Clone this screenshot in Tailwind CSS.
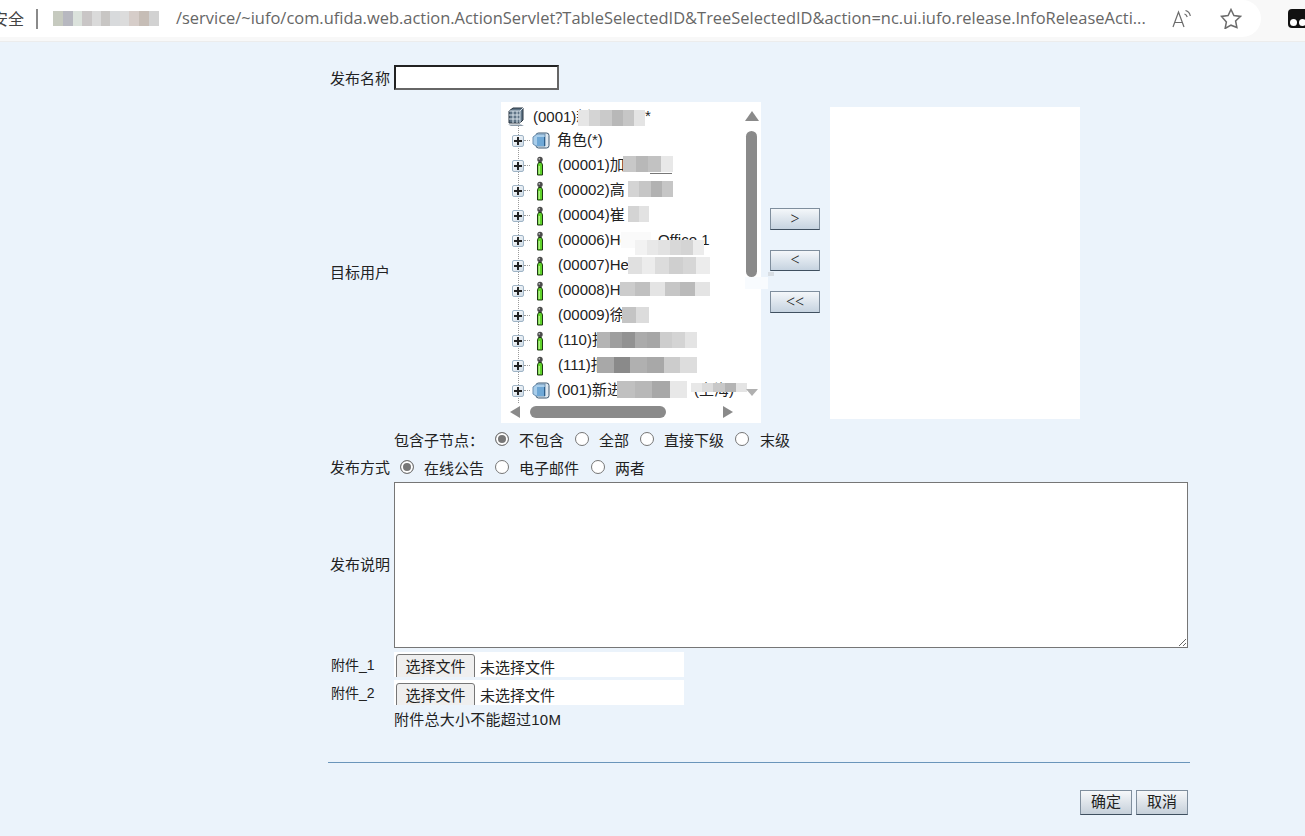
<!DOCTYPE html>
<html>
<head>
<meta charset="utf-8" />
<script src="https://cdn.jsdelivr.net/npm/@tailwindcss/browser@4"></script>
</head>
<body class="relative bg-[#ebf3fb] text-[15px] text-[#222] font-['Liberation_Sans','Noto_Sans_CJK_SC',sans-serif] overflow-hidden h-[836px]">

<!-- browser toolbar -->
<header class="h-[42px] bg-[#f8f8f8] border-b border-[#ececec] flex overflow-hidden font-['Open_Sans','Noto_Sans_CJK_SC',sans-serif]">
  <div class="h-[37px] w-[1269px] shrink-0 -ml-[8px] bg-white rounded-r-[19px] flex items-center text-[#5f5f5f]">
    <span class="text-[16px] w-[32px] shrink-0 text-[#444] whitespace-nowrap">安全</span>
    <span class="ml-[12px] w-[2px] h-[20px] bg-[#8a8a8a] shrink-0"></span>
    <span class="ml-[15px] w-[118px] h-[15px] shrink-0 flex">
      <i class="w-[10px] bg-[#c6cabf]"></i><i class="w-[10px] bg-[#b7b8c0]"></i><i class="w-[9px] bg-[#dbe2dc]"></i><i class="w-[10px] bg-[#c9c6c6]"></i><i class="w-[9px] bg-[#dadada]"></i><i class="w-[9px] bg-[#c8c6c4]"></i><i class="w-[10px] bg-[#d8dadc]"></i><i class="w-[9px] bg-[#dcdcdc]"></i><i class="w-[10px] bg-[#d6cdc9]"></i><i class="w-[10px] bg-[#c6bdb6]"></i><i class="w-[10px] bg-[#d2d2d2]"></i>
    </span>
    <span class="ml-[5px] text-[16.45px] text-[#666] whitespace-nowrap">/service/~iufo/com.ufida.web.action.ActionServlet?TableSelectedID&amp;TreeSelectedID&amp;action=nc.ui.iufo.release.InfoReleaseActi...</span>
    <svg class="ml-auto shrink-0" width="20" height="20" viewBox="0 0 20 20" fill="none" stroke="#6b6b6b" stroke-width="1.2"><path d="M1 18 6.500 3l5.500 15M2.800 13.500h7.400"/><path d="M12.500 5c1.500.5 2.300 1.400 2.700 3M13.500 1.500c2.600.7 4.300 2.500 4.800 5.500"/></svg>
    <svg class="ml-[28px] mr-[19px] shrink-0" width="22" height="21" viewBox="0 0 22 21" fill="none" stroke="#6b6b6b" stroke-width="1.5"><path d="M11 1.500l2.900 6.100 6.600.8-4.900 4.500 1.300 6.600L11 17.200l-5.900 3.300 1.300-6.600L1.500 8.400l6.600-.8z"/></svg>
  </div>
  <div class="ml-[27px] mt-[9px] w-[30px] h-[19px] bg-[#111] rounded-[4px] shrink-0 relative">
    <span class="absolute left-[2px] top-[10px] size-[7px] rounded-full bg-white"></span>
    <span class="absolute left-[11px] top-[10px] size-[7px] rounded-full bg-white"></span>
  </div>
</header>

<main class="ml-[328px] w-[862px]">
  <!-- name -->
  <div class="mt-[23px] flex items-center h-[25px]">
    <label class="w-[66px] pl-[2px] shrink-0 pt-[3px]">发布名称</label>
    <input class="w-[165px] h-[25px] bg-white border-2 border-t-[#222] border-l-[#222] border-r-[#666] border-b-[#666]" />
  </div>

  <!-- target users -->
  <div class="mt-[12px] flex items-center h-[321px]">
    <label class="w-[173px] pl-[2px] shrink-0 mt-[22px]">目标用户</label>
    <div id="tree" class="relative w-[260px] h-[321px] bg-white overflow-hidden pt-[3px] shrink-0">
      <span class="absolute left-[17px] top-[24px] bottom-[2px] border-l border-dotted border-[#9a9a9a]"></span>
      <!-- scrollbars -->
      <span class="absolute z-20 left-[244px] top-[9px] w-0 h-0 border-x-[7px] border-x-transparent border-b-[10px] border-b-[#8a8a8a]"></span>
      <span class="absolute z-20 left-[245px] top-[29px] w-[11px] h-[146px] rounded-full bg-[#8a8a8a]"></span>
      <span class="absolute z-20 left-[245px] top-[287px] w-0 h-0 border-x-[6px] border-x-transparent border-t-[7px] border-t-[#b0b0b0]"></span>
      <div class="absolute z-20 left-0 right-0 bottom-0 h-[19px] bg-white">
        <span class="absolute left-[9px] top-[2px] w-0 h-0 border-y-[6px] border-y-transparent border-r-[10px] border-r-[#8a8a8a]"></span>
        <span class="absolute left-[29px] top-[2px] w-[136px] h-[12px] rounded-full bg-[#8a8a8a]"></span>
        <span class="absolute left-[222px] top-[2px] w-0 h-0 border-y-[6px] border-y-transparent border-l-[10px] border-l-[#8a8a8a]"></span>
      </div>
    </div>
    <div class="ml-[9px] w-[50px] flex flex-col gap-[20px] shrink-0 -mt-[5px]">
      <button class="h-[22px] border border-[#7f8e9d] border-b-[#3f4f5f] bg-linear-to-b from-[#f4f7fa] to-[#c6d3e0] text-[16px] leading-none font-['Liberation_Serif',serif]">&gt;</button>
      <button class="h-[21px] border border-[#7f8e9d] border-b-[#3f4f5f] bg-linear-to-b from-[#f4f7fa] to-[#c6d3e0] text-[16px] leading-none font-['Liberation_Serif',serif]">&lt;</button>
      <button class="h-[22px] border border-[#7f8e9d] border-b-[#3f4f5f] bg-linear-to-b from-[#f4f7fa] to-[#c6d3e0] text-[16px] leading-none font-['Liberation_Serif',serif]">&lt;&lt;</button>
    </div>
    <div class="ml-[10px] w-[250px] h-[312px] bg-white shrink-0 mt-[1px]"></div>
  </div>

  <!-- include children -->
  <div class="mt-[4px] h-[28px] flex items-center pl-[66px]">
    <span class="w-[101px] shrink-0 mt-[1px]">包含子节点：</span>
    <input type="radio" name="sub" checked class="appearance-none size-[14px] rounded-full border border-[#767676] bg-[#777] shadow-[inset_0_0_0_2px_white] -mt-[4px]" />
    <span class="ml-[10px] mt-[1px]">不包含</span>
    <input type="radio" name="sub" class="appearance-none size-[14px] rounded-full border border-[#767676] bg-white ml-[11px] -mt-[4px]" />
    <span class="ml-[10px] mt-[1px]">全部</span>
    <input type="radio" name="sub" class="appearance-none size-[14px] rounded-full border border-[#767676] bg-white ml-[11px] -mt-[4px]" />
    <span class="ml-[10px] mt-[1px]">直接下级</span>
    <input type="radio" name="sub" class="appearance-none size-[14px] rounded-full border border-[#767676] bg-white ml-[11px] -mt-[4px]" />
    <span class="ml-[11px] mt-[1px]">末级</span>
  </div>

  <!-- publish mode -->
  <div class="h-[27px] flex items-center">
    <label class="w-[72px] pl-[2px] shrink-0">发布方式</label>
    <input type="radio" name="mode" checked class="appearance-none size-[14px] rounded-full border border-[#767676] bg-[#777] shadow-[inset_0_0_0_2px_white] -mt-[4px]" />
    <span class="ml-[10px] mt-[1px]">在线公告</span>
    <input type="radio" name="mode" class="appearance-none size-[14px] rounded-full border border-[#767676] bg-white ml-[11px] -mt-[4px]" />
    <span class="ml-[10px] mt-[1px]">电子邮件</span>
    <input type="radio" name="mode" class="appearance-none size-[14px] rounded-full border border-[#767676] bg-white ml-[12px] -mt-[4px]" />
    <span class="ml-[10px] mt-[1px]">两者</span>
  </div>

  <!-- description -->
  <div class="flex items-center h-[166px]">
    <label class="w-[66px] pl-[2px] shrink-0">发布说明</label>
    <textarea class="w-[794px] h-[166px] bg-white border border-[#767676] block"></textarea>
  </div>

  <!-- attachments -->
  <div class="mt-[4px] flex h-[25px]">
    <label class="w-[66px] pl-[3px] shrink-0 pt-[3px] text-[14px]">附件_1</label>
    <div class="w-[290px] h-[25px] bg-white overflow-hidden flex pl-[2px] pt-[2px]">
      <button class="w-[79px] h-[30px] bg-[#efefef] border border-[#767676] rounded-[3px] pt-0 pb-[4px]">选择文件</button>
      <span class="ml-[5px] pt-[3px]">未选择文件</span>
    </div>
  </div>
  <div class="mt-[3px] flex h-[25px]">
    <label class="w-[66px] pl-[3px] shrink-0 pt-[3px] text-[14px]">附件_2</label>
    <div class="w-[290px] h-[25px] bg-white overflow-hidden flex pl-[2px] pt-[3px]">
      <button class="w-[79px] h-[30px] bg-[#efefef] border border-[#767676] rounded-[3px] pt-0 pb-[4px]">选择文件</button>
      <span class="ml-[5px] pt-[2px]">未选择文件</span>
    </div>
  </div>
  <p class="mt-[5px] ml-[66px] leading-[20px] tracking-[0.25px]">附件总大小不能超过10M</p>

  <div class="mt-[32px] h-px bg-[#6a95ba]"></div>

  <div class="mt-[27px] flex justify-end gap-[4px] pr-[2px]">
    <button class="w-[52px] h-[25px] border border-[#7f8e9d] border-b-[#3f4f5f] bg-linear-to-b from-[#f6f8fa] to-[#c6d0da]">确定</button>
    <button class="w-[52px] h-[25px] border border-[#7f8e9d] border-b-[#3f4f5f] bg-linear-to-b from-[#f6f8fa] to-[#c6d0da]">取消</button>
  </div>
</main>

<!-- stray bits of the redaction, over the gap beside the tree -->
<span class="absolute left-[745px] top-[277px] w-[23px] h-[12px] bg-[#f8fbfe]"></span>
<span class="absolute left-[768px] top-[272px] w-[6px] h-[4px] bg-[#d8dee4]"></span>

<script>
  const userIcon = '<svg class="shrink-0" width="10" height="20" viewBox="0 0 10 20"><circle cx="5" cy="3.500" r="2.700" fill="#4a4a4a"/><circle cx="4.300" cy="2.800" r=".9" fill="#bbb"/><path d="M3.500 6.500h3l1 2.500v10h-5V9z" fill="#5fd32a" stroke="#1f3a14"/><rect x="3.500" y="10" width="1.500" height="8" fill="#b4f08a"/></svg>';
  const cubeIcon = '<svg class="shrink-0" width="18" height="17" viewBox="0 0 18 17"><rect x="4" y="1" width="13" height="15" rx="2.500" fill="#dfe8f0" stroke="#3f5a72"/><path d="M1 5 5 2h8v12H4l-3-2z" fill="#a8cdea" stroke="#6c8fae"/><path d="M5 5h8v9H5z" fill="#6fa8d6"/><path d="M13 5v9l-1 0V5z" fill="#2e5f8c"/></svg>';
  const rootIcon = '<svg class="shrink-0" width="19" height="20" viewBox="0 0 19 20"><path d="M2 4 6 1h10v12l-3 3H2z" fill="#5f7486" stroke="#27333e"/><path d="M2 8h11M2 12h11M6 4v12M10 4v12M13 4v12M2 4h11l3-3" stroke="#d8e2ea" fill="none"/><path d="M1 17.500h13l3 1.500H4z" fill="#8b9aa8"/></svg>';
  const plus = '<span class="relative shrink-0 size-[12px] border border-[#9fb4c6] bg-linear-to-br from-white to-[#cfdbe6] rounded-[2px] flex items-center justify-center z-10"><i class="absolute w-[8px] h-[2px] bg-[#222]"></i><i class="absolute h-[8px] w-[2px] bg-[#222]"></i></span><span class="w-[6px] border-t border-dotted border-[#9a9a9a] shrink-0"></span>';

  // label, icon, masks: [x from tree left, y from row top, width, height, cell colours]
  const rows = [
    ["(0001)新", rootIcon, [[77, 5, 67, 16, ["#e6e6e6","#d4d4d4","#cacaca","#b8b8b8","#c6c6c6","#e4e4e4"]]], "*"],
    ["角色(*)", cubeIcon, []],
    ["(00001)加", userIcon, [[122, 3, 50, 16, ["#c8c8c8","#b8b8b8","#c2c2c2","#e8e8e8"]], [149, 20, 22, 1, ["#777777"]]]],
    ["(00002)高", userIcon, [[127, 3, 45, 16, ["#d4d4d4","#c6c6c6","#b2b2b2","#c6c6c6"]]]],
    ["(00004)崔", userIcon, [[127, 3, 21, 16, ["#d4d4d4","#e2e2e2"]]]],
    ["(00006)Head&nbsp;&nbsp; Office 1", userIcon, [[120, 4, 30, 16, ["#fafafa"]], [134, 12, 69, 15, ["#f2f2f2","#e8e8e8","#e2e2e2","#d8d8d8","#d4d4d4","#ececec"]]]],
    ["(00007)He", userIcon, [[127, 4, 82, 17, ["#e0e0e0","#ececec","#dcdcdc","#cfcfcf","#d6d6d6","#ececec"]]]],
    ["(00008)H", userIcon, [[119, 4, 90, 14, ["#cccccc","#c0c0c0","#e4e4e4","#c6c6c6","#bababa","#e4e4e4"]]]],
    ["(00009)徐", userIcon, [[121, 4, 27, 16, ["#c4c4c4","#dcdcdc"]]]],
    ["(110)报", userIcon, [[96, 4, 100, 16, ["#b4b4b4","#9e9e9e","#929292","#ababab","#a6a6a6","#cdcdcd","#d4d4d4","#e4e4e4"]]]],
    ["(111)报", userIcon, [[96, 4, 100, 16, ["#a8a8a8","#8a8a8a","#b0b0b0","#a8a8a8","#cccccc","#dddddd"]]]],
    ['(001)新进<span class="ml-[72px]">(上海)</span>', cubeIcon, [[116, 3, 70, 17, ["#c0c0c0","#b8b8b8","#a8a8a8","#e8e8e8"]], [190, 5, 56, 9, ["#e8e8e8","#dcdcdc","#c8c8c8","#b4b4b4","#e4e4e4"]]]],
  ];

  const tree = document.getElementById("tree");
  rows.forEach(function (r, i) {
    const row = document.createElement("div");
    const first = i === 0;
    const isUser = r[1] === userIcon;
    row.className = first ? "relative h-[23px] flex items-center pl-[6px]" : "relative h-[25px] flex items-center pl-[11px]";
    let html = first ? r[1] : plus + '<span class="shrink-0" style="width:' + (isUser ? 5 : 2) + 'px"></span>' + r[1];
    html += '<span class="whitespace-nowrap ' + (first ? 'mt-[2px]' : '') + '" style="margin-left:' + (isUser ? 13 : 7) + 'px">' + r[0] + '</span>';
    if (r[3]) html += '<span class="absolute left-[144px]">' + r[3] + '</span>';
    row.innerHTML = html;
    r[2].forEach(function (s) {
      const mask = document.createElement("div");
      mask.className = "absolute z-10 flex";
      mask.style.cssText = "left:" + s[0] + "px;top:" + s[1] + "px;width:" + s[2] + "px;height:" + s[3] + "px";
      s[4].forEach(function (c) {
        const cell = document.createElement("i");
        cell.className = "flex-1";
        cell.style.background = c;
        mask.appendChild(cell);
      });
      row.appendChild(mask);
    });
    tree.appendChild(row);
  });
</script>
</body>
</html>
